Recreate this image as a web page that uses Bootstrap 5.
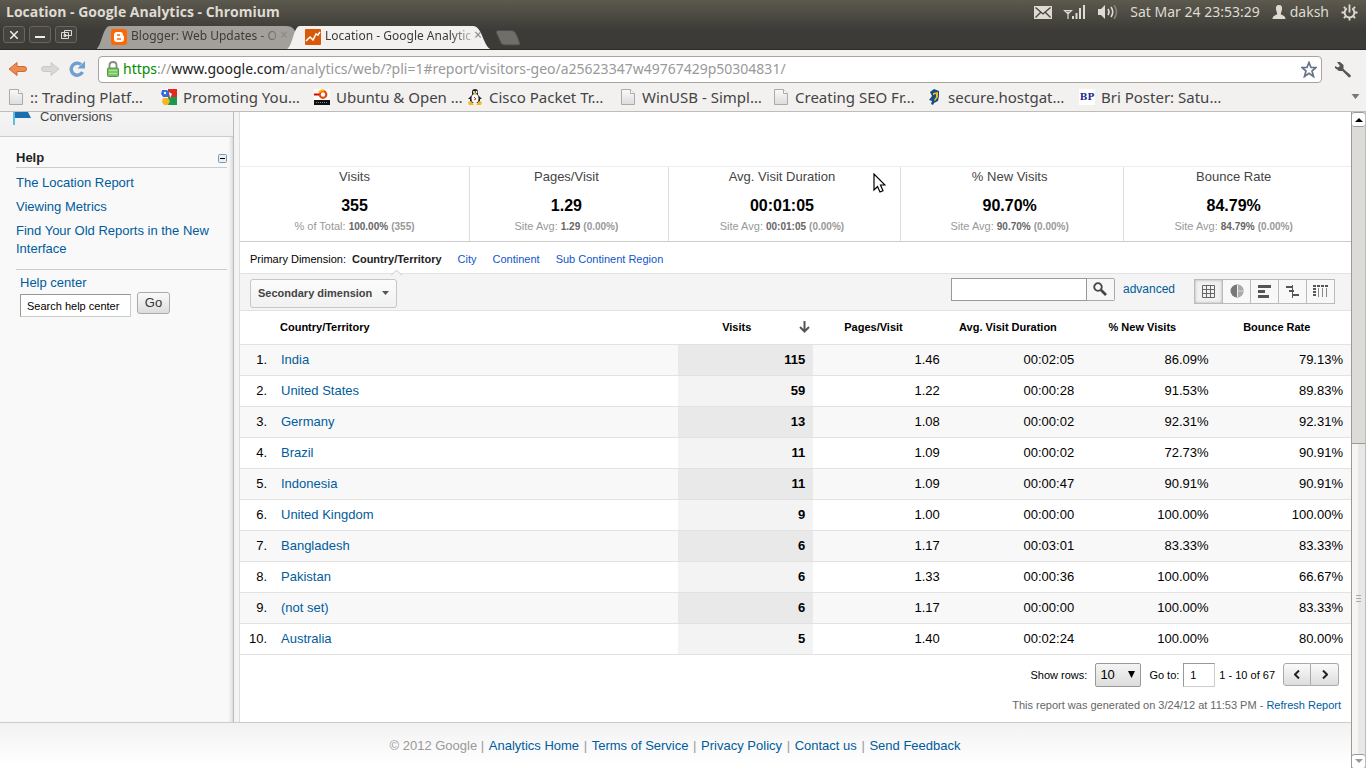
<!DOCTYPE html>
<html lang="en">
<head>
<meta charset="utf-8">
<meta name="viewport" content="width=device-width, initial-scale=1">
<title>Location - Google Analytics</title>
<link rel="stylesheet" href="https://cdn.jsdelivr.net/npm/bootstrap@5.3.0/dist/css/bootstrap.min.css">
<style>
:root{--ui:"Noto Sans","Open Sans",sans-serif;--page:"Liberation Sans",Arial,sans-serif;--lnk:#005c9c}
body{font-family:var(--page);font-size:13px;line-height:18px;color:#000;background:#fff}
a{text-decoration:none;color:var(--lnk)}
svg{display:block;flex:none}
button{font-family:inherit;color:inherit}
.chrome-top{background:linear-gradient(#5c594e 0,#3c3b37 30px);border-bottom:1px solid #2b2a27;font-family:var(--ui);color:#dfdbd2}
.menubar{height:24px;padding:0 8px 0 6px;font-size:14px}
.menubar .ttl{font-size:14px;font-weight:700;font-family:"Open Sans",sans-serif}
.tabstrip{height:25px;padding-left:3px}
.winbtn{width:22px;height:17px;border:1px solid #69665e;border-radius:3px;background:#45443f;padding:0;margin-top:2px}
.tabx{height:24px;margin-top:1px;position:relative;font-size:12px}
.tabx .shape{position:absolute;inset:0;width:100%;height:100%}
.tabx .fav{position:relative;margin:4px 4px 0 0}
.tabx a{position:relative;color:#3c3b37;white-space:nowrap;line-height:22px;width:149px}
.tabx button{position:relative;border:0;background:none;padding:0;color:#8a8884;font-size:14px;line-height:20px}
.tab-back{width:202px;padding-left:14px}
.tab-front{width:214px;padding-left:18px;margin-left:-12px}
.fade-t{-webkit-mask-image:linear-gradient(90deg,#000 84%,rgba(0,0,0,.2));mask-image:linear-gradient(90deg,#000 84%,rgba(0,0,0,.2))}
.newtab{margin:6px 0 0 -6px}
.toolbar{height:34px;padding:4px 14px 0 8px;background:#f2f1f0}
.tbtn{border:0;background:none;padding:0}
.urlbox{height:27px;border:1px solid #aaa49d;border-radius:4px;background:#fff;padding:0 4px 0 4px;font:14px/22px var(--ui);color:#999}
.urlbox b{font-weight:400;color:#222}
.urlbox i{font-style:normal;color:#008c00}
.marks{height:28px;background:#f2f1f0;border-bottom:1px solid #c0bcb7;padding:0 6px 2px 8px;font:15px/20px var(--ui)}
.marks a{color:#444;white-space:nowrap;width:153px;gap:6px}
.side{width:234px;background:#f9f9f9;border-right:1px solid #bbb;box-shadow:inset -4px 0 4px -3px #ccc}
.gutter{width:6px;background:#f4f4f4;border-right:1px solid #ddd}
.conv{height:25px;border-bottom:1px solid #ccc;background:linear-gradient(#f4f4f4,#efefef);color:#444;padding-left:13px;gap:7px}
.conv span{line-height:10px}
.helpbox{padding:12px 6px 0 16px}
.helphd{border-bottom:1px solid #ccc;font-weight:700;color:#222}
.helpbox .links{padding:6px 0 11px;border-bottom:1px solid #ccc;gap:6px}
.helpbox label{color:var(--lnk)}
.inp{border:1px solid #999;border-right-color:#ccc;border-bottom-color:#ccc;background:#fff;border-radius:0;font-size:11px;padding:0 6px}
.inp.help{width:111px;height:23px;margin-top:2px;font-size:11px}
.inp.find{width:136px;height:23px;border-color:#999}
.inp.page-no{width:32px;height:24px}
.gbtn{border:1px solid #aaa;border-radius:3px;background:linear-gradient(#fafafa,#ddd);color:#333;font-size:13px;padding:0}
.gbtn.go{width:33px;height:22px;margin-left:6px}
.gbtn.find{width:28px;height:23px;border-radius:0 2px 2px 0;border-left:0;background:#f7f7f7}
.gbtn.step{width:28px;height:23px}
.metric{border-right:1px solid #ddd;height:74px;padding:1px 5px 0 0;text-align:center;color:#444}
.metric:first-child{padding-right:0}
.metric:last-child{border-right:0}
.metric strong{display:block;font-size:16px;line-height:20px;margin-top:10px;color:#000}
.metric .vs{font-size:11px;line-height:14px;margin-top:3px;color:#999}
.metric .vs b{font-size:10px}
.metric .vs b:first-child{color:#666}
.chartend{height:55px;border-bottom:1px solid #eee}
.sumrow{border-bottom:1px solid #ccc}
.dims{height:31px;padding:2px 10px 0;font-size:11px;gap:16px}
.dims a{color:#15c}
.dims .on{color:#222;font-weight:700;margin-left:-10px}
.dims .notch{position:absolute;left:50%;bottom:-9px;margin-left:-6px}
.ctl{height:38px;background:#f4f4f4;border:solid #e2e2e2;border-width:1px 0;padding:2px 16px 0 10px}
.secdim{height:29px;width:147px;border:1px solid #c6c6c6;border-radius:3px;background:linear-gradient(#fcfcfc,#f1f1f1);font-size:11px;font-weight:700;color:#444;padding:0 7px}
.adv{font-size:12px;margin:0 20px 0 8px}
.views button{width:29px;height:25px;border:1px solid #bbb;background:#f8f8f8;padding:0;margin-left:-1px}
.views button:first-child{background:#f1f1f1;box-shadow:inset 0 0 3px #aaa}
.geo{table-layout:fixed;width:100%;margin:0}
.geo th{font-size:11px;height:33px;padding:0 14px 0 0;text-align:center;border-bottom:1px solid #e2e2e2;line-height:16px}
.geo thead tr{height:33px}
.geo td{height:31px;padding:0 8px 0 0;text-align:right;border-bottom:1px solid #e2e2e2}
.geo td:first-child{padding-right:6px}
.geo th.nm,.geo td.nm{text-align:left;padding-left:8px}
.geo th.nm{padding-left:7px}
.geo tbody tr:nth-child(odd){background:#f8f8f8}
.geo td.v{font-weight:700;background:#f3f3f3}
.geo tr:nth-child(odd) td.v{background:#e9e9e9}
.geo .n{width:33px}
.geo .w{width:12.1%}
.geo .wv{width:12.2%}
.sorted{margin-right:-11px}
.pager{font-size:11px;padding:8px 12px 0 0}
.pager select{width:46px;height:24px;border:1px solid #999;border-radius:2px;background:linear-gradient(#f4f4f4,#ddd);font-size:13px;padding:0 4px;appearance:none}
.selwrap{position:relative}
.selwrap svg{position:absolute;right:6px;top:8px;pointer-events:none}
.gen{font-size:11px;color:#666;padding:9px 10px 8px 0}
.foot{border-top:1px solid #ccc;background:linear-gradient(#f2f2f2,#fff 90%);color:#999;min-height:47px}
.foot a{padding:0 1px}
.sbar{width:15px;background:#dddbd8;border-left:1px solid #999;border-right:1px solid #bbb}
.sbar .cap{height:15px;background:#fff;border:1px solid #999;border-width:1px 0;border-radius:3px}
.sbar .thumb{flex:316}
.sbar .low{background:linear-gradient(90deg,#f6f5f4 50%,#e9e8e6 50%);border-top:1px solid #999;flex:310}
.cursor-arrow{position:absolute;left:57%;top:61px}
</style>
</head>
<body class="min-vh-100 d-flex flex-column">
<svg width="0" height="0" class="position-absolute" aria-hidden="true">
<symbol id="doc" viewBox="0 0 16 16"><linearGradient id="pg" x2="0" y2="1"><stop stop-color="#fafafa"/><stop offset="1" stop-color="#dcdcdc"/></linearGradient><path d="M1.500.5h9l4 4v11h-13z" fill="url(#pg)" stroke="#aaa"/><path d="M10.500.5v4h4" fill="#fff" stroke="#aaa"/></symbol>
</svg>
<header>
<div class="chrome-top">
<div class="menubar d-flex align-items-center">
<span class="ttl me-auto">Location - Google Analytics - Chromium</span>
<svg width="18" height="13" viewBox="0 0 18 13"><rect width="18" height="13" fill="#dfdbd2"/><path d="M1.500 1.500 9 8l7.500-6.500M1.500 11.500 6.500 6.500M16.500 11.500l-5-5" fill="none" stroke="#45443f" stroke-width="1.300"/></svg>
<svg class="ms-2 me-2 pe-1" width="30" height="16" viewBox="0 0 26 16"><path d="M4.500 6.500h7L8 10zM8 6v9" fill="none" stroke="#dfdbd2" stroke-width="1.200"/><path d="M12 12h2v3h-2zM15.500 9h2v6h-2zM19 4h2v11h-2zM23 1h2v14h-2z" fill="#dfdbd2"/></svg>
<svg width="20" height="14" viewBox="0 0 20 14"><path d="M0 4h3l4-4v14l-4-4H0z" fill="#dfdbd2"/><path d="M10 4q2 3 0 6M13 2q3.500 5 0 10" fill="none" stroke="#dfdbd2" stroke-width="1.600"/><path d="M16 0q5 7 0 14" fill="none" stroke="#858178" stroke-width="1.600"/></svg>
<span class="ms-2 ps-1 me-1">Sat Mar 24 23:53:29</span>
<svg class="ms-1 me-1 ps-1" width="18" height="14" viewBox="0 0 13 14"><path d="M6.500 0C9 0 10 1.800 9.500 4.500 9 7 8.300 7.500 8.300 9c0 1 4.700 1 4.700 5H0c0-4 4.700-4 4.700-5 0-1.500-.7-2-1.200-4.500C3 1.800 4 0 6.500 0z" fill="#dfdbd2"/></svg>
<span>daksh</span>
<svg class="ms-2 ps-1" width="21" height="17" viewBox="0 0 16 16"><g fill="none" stroke="#dfdbd2"><path d="M5.500 4.200a4.600 4.600 0 1 0 5 0" stroke-width="1.800"/><path d="M8 .5V8M8 13v2.500M3 8H.5M15.500 8H13M4.500 11.500l-1.800 1.800M11.500 11.500l1.800 1.800M4.300 4.300 2.700 2.700M11.700 4.300l1.600-1.600" stroke-width="1.700"/></g></svg>
</div>
<div class="tabstrip d-flex">
<div class="d-flex gap-1 me-3 pe-1">
<button class="winbtn d-flex align-items-center justify-content-center" aria-label="Close"><svg width="8" height="8" viewBox="0 0 8 8"><path d="M0 0l8 8M8 0 0 8" stroke="#eee" stroke-width="1.500"/></svg></button>
<button class="winbtn d-flex align-items-center justify-content-center" aria-label="Minimize"><svg width="10" height="8"><path d="M0 5h10v2H0z" fill="#eee"/></svg></button>
<button class="winbtn d-flex align-items-center justify-content-center" aria-label="Restore"><svg width="11" height="9"><path d="M3.500.5h7v5h-7zM.5 2.500h7v6h-7zM3 4.500h2v2H3z" fill="none" stroke="#ddd"/></svg></button>
</div>
<div class="tabx tab-back d-flex align-items-start">
<svg class="shape" viewBox="0 0 202 24" preserveAspectRatio="none"><path d="M-2 24C5 24 5 1 13 1h176c8 0 8 4 13 12v11z" fill="#a3a09b"/></svg>
<svg class="fav" width="16" height="16" viewBox="0 0 16 16"><rect width="16" height="16" rx="3" fill="#f60"/><path d="M6 3h3q3 0 3 3 .3 1 1 1v3q0 3-3 3H6q-3 0-3-3V6q0-3 3-3z" fill="#fff"/><path d="M6 6h3M6 10h4" stroke="#f60" stroke-width="1.400"/></svg>
<a href="#" class="fade-t">Blogger: Web Updates - O</a>
<button aria-label="Close tab">×</button>
</div>
<div class="tabx tab-front d-flex align-items-start">
<svg class="shape" viewBox="0 0 214 24" preserveAspectRatio="none"><path d="M-2 25C6 24 6 1 13 1h173c10 0 10 23 20 24z" fill="#f2f1f0"/></svg>
<svg class="fav" width="16" height="16" viewBox="0 0 16 16"><rect width="16" height="16" rx="1" fill="#d85a08"/><path d="M1 12l4-4 3 3 3-6 2 1 2-3" fill="none" stroke="#fff" stroke-width="1.500"/></svg>
<a href="#" class="fade-t">Location - Google Analytic</a>
<button aria-label="Close tab">×</button>
</div>
<svg class="newtab" width="26" height="16" viewBox="0 0 26 16"><path d="M3 .5h14q3 0 5 5l3 8q0 1.500-2 1.500H9q-3 0-4-4L1 2Q1 .5 3 .5z" fill="#706e69" stroke="#4e4c48"/></svg>
</div>
</div>
<div class="toolbar d-flex align-items-center gap-2">
<button class="tbtn" aria-label="Back"><svg width="20" height="16" viewBox="0 0 20 16"><path d="M1 8l8-6.500v4h7q2.500 0 2.500 2.500T16 10.500H9v4z" fill="#ec8b54" stroke="#d06a30"/></svg></button>
<button class="tbtn ms-1" aria-label="Forward"><svg width="20" height="16" viewBox="0 0 20 16"><path d="M19 8l-8-6.500v4H4Q1.500 5.500 1.500 8T4 10.500h7v4z" fill="#dad8d5" stroke="#cbc9c6"/></svg></button>
<button class="tbtn" aria-label="Reload"><svg width="18" height="18" viewBox="0 0 18 18"><path d="M13 4.500A6 6 0 1 0 14.500 12" fill="none" stroke="#6f9fd2" stroke-width="3.400"/><path d="M17 1v7.500H9.500z" fill="#6f9fd2"/></svg></button>
<div class="urlbox flex-grow-1 d-flex align-items-center ms-1">
<svg class="ms-1" width="12" height="16" viewBox="0 0 12 16"><path d="M2.500 8V4q0-3 3.500-3t3.500 3v4" fill="none" stroke="#888" stroke-width="1.800"/><rect x=".5" y="7" width="11" height="8.500" rx="1" fill="#7dc465" stroke="#4c9a3c"/><path d="M2 9.500h8M2 12.500h8" stroke="#b4e3a2"/></svg>
<span class="flex-grow-1 ps-1 text-nowrap"><i>https</i>://<b>www.google.com</b>/analytics/web/?pli=1#report/visitors-geo/a25623347w49767429p50304831/</span>
<button class="tbtn" aria-label="Bookmark this page"><svg width="16" height="17" viewBox="0 0 16 17"><path d="M8 1.500l2 5h5l-4 3.500 1.500 5.500L8 12.300 3.500 15.500 5 10 1 6.500h5z" fill="#fff" stroke="#65728c" stroke-width="1.700"/></svg></button>
</div>
<button class="tbtn ms-1" aria-label="Customize"><svg width="18" height="17" viewBox="0 0 18 17"><path d="M3 1l3 0 3.500 3v4l7 6q1 2-1.500 2.500L8.500 10H5L1 7V5l3 1.500L6 5z" fill="#555"/></svg></button>
</div>
<nav class="marks d-flex align-items-center" aria-label="Bookmarks">
<a href="#" class="d-flex align-items-center"><svg width="16" height="16"><use href="#doc"/></svg>:: Trading Platf…</a>
<a href="#" class="d-flex align-items-center"><svg width="16" height="16" viewBox="0 0 16 16"><rect x="7" width="9" height="8" fill="#e02a20"/><rect x="7" y="8" width="9" height="8" fill="#1a9a4c"/><rect width="7" height="8" fill="#fff"/><path d="M1 1h5l3 3-2 4H2L0 5z" fill="#3869d8"/><path d="M2 9h5l2 3-2 4H3l-2-3z" fill="#f2b722"/><path d="M8 3l3 2-2 4z" fill="#fff"/><circle cx="4" cy="4" r="1.200" fill="#fff"/></svg>Promoting You…</a>
<a href="#" class="d-flex align-items-center"><svg width="16" height="16" viewBox="0 0 16 16"><rect width="16" height="16" fill="#fff"/><circle cx="9" cy="5.500" r="3.300" fill="none" stroke="#e24a12" stroke-width="2.200"/><path d="M5 3.500q1.500-3 5-2" fill="none" stroke="#fb0" stroke-width="2"/><path d="M0 5.500h5" stroke="#d00" stroke-width="2"/><rect y="11" width="16" height="5" fill="#111"/><path d="M2 13.500h12" stroke="#888" stroke-dasharray="1 1"/></svg>Ubuntu &amp; Open …</a>
<a href="#" class="d-flex align-items-center"><svg width="16" height="16" viewBox="0 0 16 16"><path d="M5 3q0-3 3-3t3 3v3l4 4-2 0v4H3v-4H1l4-4z" fill="#222"/><ellipse cx="8" cy="9.500" rx="3.500" ry="4.500" fill="#fff"/><path d="M1 13l3-1 3 4H2zM15 13l-3-1-3 4h5zM6 4h4L8 6z" fill="#eebc1a"/><circle cx="7" cy="3" r="1" fill="#fff"/><circle cx="9.500" cy="3" r="1" fill="#fff"/><path d="M7 8l2 2-2 1" stroke="#d22" fill="none"/></svg>Cisco Packet Tr…</a>
<a href="#" class="d-flex align-items-center"><svg width="16" height="16"><use href="#doc"/></svg>WinUSB - Simpl…</a>
<a href="#" class="d-flex align-items-center"><svg width="16" height="16"><use href="#doc"/></svg>Creating SEO Fr…</a>
<a href="#" class="d-flex align-items-center"><svg width="16" height="16" viewBox="0 0 16 16"><path d="M4 3l4-3 5 2v5l-1 5-4 2-1 2-2-1 1-3-3-1 3-4z" fill="#174c80"/><path d="M7 4l5-1v5l-3 4-1-1 2-3V5L7 6z" fill="#f0ba20"/></svg>secure.hostgat…</a>
<a href="#" class="d-flex align-items-center me-auto"><svg width="16" height="16" viewBox="0 0 16 16"><rect width="16" height="16" fill="#fff"/><text x="8" y="11" text-anchor="middle" font-family="DejaVu Serif, serif" font-weight="700" font-size="9" fill="#1b2a90">BP</text></svg>Bri Poster: Satu…</a>
<button class="tbtn" aria-label="More bookmarks"><svg width="9" height="5" viewBox="0 0 8 5"><path d="M0 0h8L4 5z" fill="#777"/></svg></button>
</nav>
</header>
<div class="d-flex flex-grow-1">
<div class="flex-fill d-flex flex-column">
<div class="d-flex flex-grow-1">
<aside class="side flex-shrink-0">
<div class="conv d-flex overflow-hidden align-items-start"><svg width="20" height="14" viewBox="0 0 20 14"><path d="M0 0h2v13H0z" fill="#5bc0de"/><path d="M2 0h13l3 6H2z" fill="#1a6fae"/></svg><span>Conversions</span></div>
<div class="helpbox">
<div class="helphd d-flex align-items-center justify-content-between">Help<button class="tbtn" aria-label="Collapse help"><svg width="9" height="9" viewBox="0 0 9 9"><rect x=".5" y=".5" width="8" height="8" rx="1" fill="#eee" stroke="#7a98b8"/><path d="M2 4.500h5" stroke="#000"/></svg></button></div>
<div class="links d-flex flex-column"><a href="#">The Location Report</a><a href="#">Viewing Metrics</a><a href="#">Find Your Old Reports in the New Interface</a></div>
<form class="ps-1 pt-1"><label for="hc" class="d-block">Help center</label>
<div class="d-flex"><input id="hc" class="inp help" value="Search help center"><button type="button" class="gbtn go">Go</button></div></form>
</div>
</aside>
<div class="gutter flex-shrink-0"></div>
<main class="flex-fill position-relative">
<svg class="cursor-arrow" width="13" height="20" viewBox="0 0 13 20"><path d="M1 1v16l3.500-3.500L7 19l3-1.300L7.500 12H12z" fill="#fff" stroke="#000" stroke-width="1.200"/></svg>
<div class="chartend"></div>
<section class="sumrow d-flex">
<div class="metric" style="width:20.700%">Visits<strong>355</strong><div class="vs">% of Total: <b>100.00%</b> <b>(355)</b></div></div>
<div class="metric" style="width:17.900%">Pages/Visit<strong>1.29</strong><div class="vs">Site Avg: <b>1.29</b> <b>(0.00%)</b></div></div>
<div class="metric" style="width:20.900%">Avg. Visit Duration<strong>00:01:05</strong><div class="vs">Site Avg: <b>00:01:05</b> <b>(0.00%)</b></div></div>
<div class="metric" style="width:20.100%">% New Visits<strong>90.70%</strong><div class="vs">Site Avg: <b>90.70%</b> <b>(0.00%)</b></div></div>
<div class="metric flex-grow-1 pe-2">Bounce Rate<strong>84.79%</strong><div class="vs">Site Avg: <b>84.79%</b> <b>(0.00%)</b></div></div>
</section>
<nav class="dims d-flex align-items-center" aria-label="Primary dimension"><span>Primary Dimension:</span><a href="#" class="on position-relative">Country/Territory<svg class="notch" width="12" height="8"><path d="M0 6.500 5.500 1 11 6.500v2H0z" fill="#f4f4f4"/><path d="M0 6.500 5.500 1 11 6.500" fill="none" stroke="#ccc"/></svg></a><a href="#">City</a><a href="#">Continent</a><a href="#">Sub Continent Region</a></nav>
<div class="ctl d-flex align-items-center">
<button class="secdim d-flex align-items-center justify-content-between me-auto">Secondary dimension<svg width="7" height="4"><path d="M0 0h7L3.500 4z" fill="#555"/></svg></button>
<div class="d-flex mb-2"><input class="inp find" aria-label="Search"><button class="gbtn find d-flex align-items-center justify-content-center" aria-label="Search"><svg width="14" height="14" viewBox="0 0 14 14"><circle cx="5" cy="5" r="3.800" fill="none" stroke="#444" stroke-width="1.800"/><path d="M8 8l5 5" stroke="#444" stroke-width="2.600"/></svg></button></div>
<a href="#" class="adv mb-2">advanced</a>
<div class="views d-flex mb-1">
<button class="d-flex align-items-center justify-content-center" aria-label="Table"><svg width="13" height="13"><path d="M.5.5h12v12H.5zM4.500 0v13M8.500 0v13M0 4.500h13M0 8.500h13" fill="none" stroke="#666"/></svg></button>
<button class="d-flex align-items-center justify-content-center" aria-label="Percentage"><svg width="14" height="14" viewBox="0 0 14 14"><circle cx="7" cy="7" r="6.500" fill="#777"/><path d="M7.500 .5A6.500 6.500 0 0 1 13.500 6.500h-6zM7.500 7.500h6A6.500 6.500 0 0 1 7.500 13.500z" fill="#aaa"/><path d="M7.500 1v12M7.500 7H14" stroke="#eee"/></svg></button>
<button class="d-flex align-items-center justify-content-center" aria-label="Performance"><svg width="13" height="13"><path d="M0 0h13v3H0zM0 5h7v3H0zM0 10h11v3H0z" fill="#555"/></svg></button>
<button class="d-flex align-items-center justify-content-center" aria-label="Comparison"><svg width="14" height="13"><path d="M0 1h7v2H0zM3 5h5v2H3zM7 9h6v2H7zM6 0h1v13H6z" fill="#555"/></svg></button>
<button class="d-flex align-items-center justify-content-center" aria-label="Pivot"><svg width="15" height="12"><path d="M0 1h15" stroke="#555" stroke-width="2" stroke-dasharray="3 1"/><path d="M1.500 3v9" stroke="#555" stroke-width="3" stroke-dasharray="2 1"/><path d="M5.500 3v9M9.500 3v9M13.500 3v9" stroke="#888"/></svg></button>
</div>
</div>
<table class="geo">
<colgroup><col class="n"><col><col class="wv"><col class="w"><col class="w"><col class="w"><col class="w"></colgroup>
<thead><tr><th></th><th class="nm">Country/Territory</th><th><div class="sorted d-flex align-items-center justify-content-end"><span class="me-5">Visits</span><svg width="11" height="12" viewBox="0 0 11 12"><path d="M5.500 0v10M1 6l4.500 4.500L10 6" fill="none" stroke="#555" stroke-width="2"/></svg></div></th><th>Pages/Visit</th><th>Avg. Visit Duration</th><th>% New Visits</th><th>Bounce Rate</th></tr></thead>
<tbody>
<tr><td>1.</td><td class="nm"><a href="#">India</a></td><td class="v">115</td><td>1.46</td><td>00:02:05</td><td>86.09%</td><td>79.13%</td></tr>
<tr><td>2.</td><td class="nm"><a href="#">United States</a></td><td class="v">59</td><td>1.22</td><td>00:00:28</td><td>91.53%</td><td>89.83%</td></tr>
<tr><td>3.</td><td class="nm"><a href="#">Germany</a></td><td class="v">13</td><td>1.08</td><td>00:00:02</td><td>92.31%</td><td>92.31%</td></tr>
<tr><td>4.</td><td class="nm"><a href="#">Brazil</a></td><td class="v">11</td><td>1.09</td><td>00:00:02</td><td>72.73%</td><td>90.91%</td></tr>
<tr><td>5.</td><td class="nm"><a href="#">Indonesia</a></td><td class="v">11</td><td>1.09</td><td>00:00:47</td><td>90.91%</td><td>90.91%</td></tr>
<tr><td>6.</td><td class="nm"><a href="#">United Kingdom</a></td><td class="v">9</td><td>1.00</td><td>00:00:00</td><td>100.00%</td><td>100.00%</td></tr>
<tr><td>7.</td><td class="nm"><a href="#">Bangladesh</a></td><td class="v">6</td><td>1.17</td><td>00:03:01</td><td>83.33%</td><td>83.33%</td></tr>
<tr><td>8.</td><td class="nm"><a href="#">Pakistan</a></td><td class="v">6</td><td>1.33</td><td>00:00:36</td><td>100.00%</td><td>66.67%</td></tr>
<tr><td>9.</td><td class="nm"><a href="#">(not set)</a></td><td class="v">6</td><td>1.17</td><td>00:00:00</td><td>100.00%</td><td>83.33%</td></tr>
<tr><td>10.</td><td class="nm"><a href="#">Australia</a></td><td class="v">5</td><td>1.40</td><td>00:02:24</td><td>100.00%</td><td>80.00%</td></tr>
</tbody>
</table>
<div class="pager d-flex justify-content-end align-items-center">
<label for="rows" class="me-2">Show rows:</label><span class="selwrap me-2"><select id="rows"><option>10</option></select><svg width="7" height="7"><path d="M0 0h7L3.500 7z"/></svg></span>
<label for="goto" class="me-1">Go to:</label><input id="goto" class="inp page-no me-1" value="1"><span class="me-2">1 - 10 of 67</span>
<div class="d-flex"><button class="gbtn step rounded-end-0 d-flex align-items-center justify-content-center" aria-label="Previous"><svg width="6" height="9"><path d="M5 .5l-4 4 4 4" fill="none" stroke="#222" stroke-width="2"/></svg></button><button class="gbtn step rounded-start-0 border-start-0 d-flex align-items-center justify-content-center" aria-label="Next"><svg width="6" height="9"><path d="M1 .5l4 4-4 4" fill="none" stroke="#222" stroke-width="2"/></svg></button></div>
</div>
<div class="gen text-end">This report was generated on 3/24/12 at 11:53 PM - <a href="#">Refresh Report</a></div>
</main>
</div>
<footer class="foot d-flex align-items-center justify-content-center"><div>© 2012 Google | <a href="#">Analytics Home</a> | <a href="#">Terms of Service</a> | <a href="#">Privacy Policy</a> | <a href="#">Contact us</a> | <a href="#">Send Feedback</a></div></footer>
</div>
<div class="sbar d-flex flex-column flex-shrink-0" aria-hidden="true">
<div class="cap d-flex align-items-center justify-content-center"><svg width="8" height="4"><path d="M0 4 4 0l4 4z"/></svg></div>
<div class="thumb"></div>
<div class="low d-flex align-items-center justify-content-center"><svg width="5" height="7"><path d="M0 .5h5M0 3.500h5M0 6.500h5" stroke="#aaa"/></svg></div>
<div class="cap d-flex align-items-center justify-content-center"><svg width="8" height="4"><path d="M0 0h8L4 4z" fill="#999"/></svg></div>
</div>
</div>
<script src="https://cdn.jsdelivr.net/npm/bootstrap@5.3.0/dist/js/bootstrap.bundle.min.js"></script>
</body>
</html>
